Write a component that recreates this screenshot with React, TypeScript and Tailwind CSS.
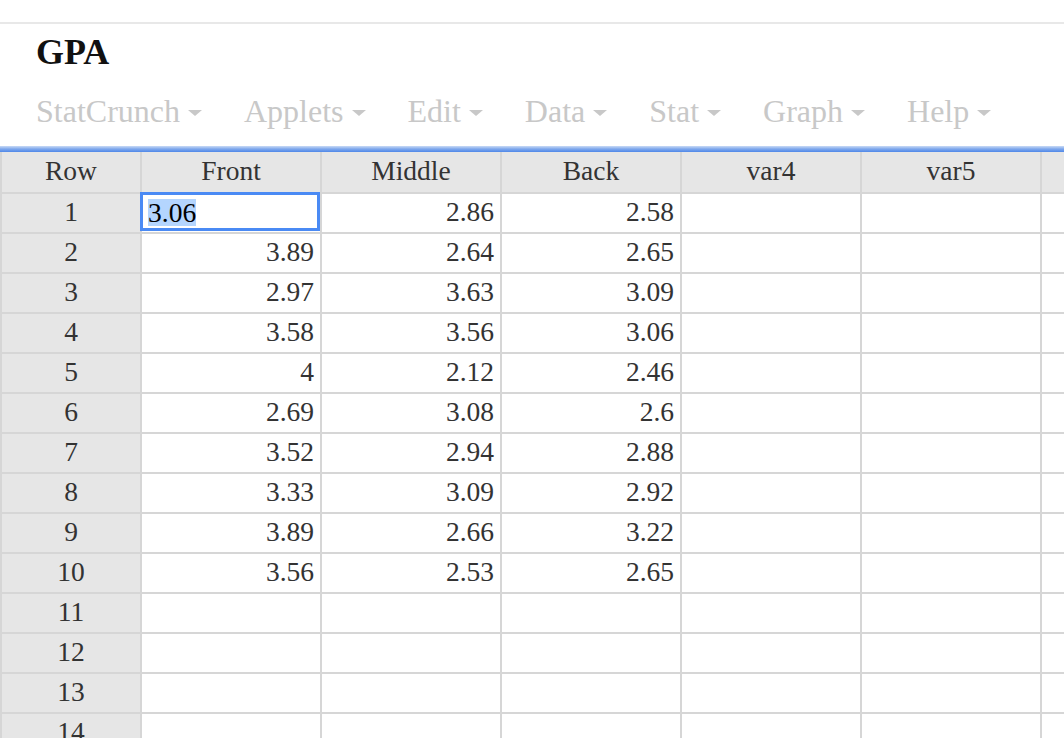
import React from "react";

const menu = ["StatCrunch", "Applets", "Edit", "Data", "Stat", "Graph", "Help"];
const headers = ["Front", "Middle", "Back", "var4", "var5", ""];
const data: string[][] = [
  ["3.06", "2.86", "2.58"],
  ["3.89", "2.64", "2.65"],
  ["2.97", "3.63", "3.09"],
  ["3.58", "3.56", "3.06"],
  ["4", "2.12", "2.46"],
  ["2.69", "3.08", "2.6"],
  ["3.52", "2.94", "2.88"],
  ["3.33", "3.09", "2.92"],
  ["3.89", "2.66", "3.22"],
  ["3.56", "2.53", "2.65"],
];

function Caret() {
  return (
    <span className="inline-block mt-[4px] w-0 h-0 border-l-[7px] border-r-[7px] border-t-[6px] border-l-transparent border-r-transparent border-t-[#c8c8c8]" />
  );
}

export default function App() {
  const rows = Array.from({ length: 14 }, (_, i) => i);
  return (
    <div
      className="w-[1064px] h-[738px] overflow-hidden bg-white"
      style={{ fontFamily: '"Liberation Serif", "Times New Roman", serif' }}
    >
      <div className="h-[22px]" />
      <div className="h-[2px] bg-[#e8e8e8]" />
      <div className="pl-[36px] pt-[8px]">
        <div className="text-[36px] leading-[40px] font-bold text-[#111]">GPA</div>
        <div className="mt-[19px] flex items-center gap-[42px] text-[32px] leading-[40px] text-[#c8c8c8]">
          {menu.map((m) => (
            <div key={m} className="flex items-center gap-[8px]">
              <span>{m}</span>
              <Caret />
            </div>
          ))}
        </div>
      </div>
      <div className="h-[15px]" />
      <div className="h-[6px] bg-gradient-to-b from-[#c9daf5] via-[#7ea7ec] to-[#4f88e8]" />
      <div className="grid grid-cols-[142px_180px_180px_180px_180px_180px_180px] text-[27.5px] text-[#333]">
        <div className="h-[42px] pb-[2px] bg-[#e6e6e6] border-l-2 border-r-2 border-b-2 border-[#d6d6d6] flex items-center justify-center leading-[38px]">
          Row
        </div>
        {headers.map((h, i) => (
          <div
            key={i}
            className="h-[42px] pb-[2px] bg-[#e6e6e6] border-r-2 border-b-2 border-[#d6d6d6] flex items-center justify-center leading-[38px]"
          >
            {h}
          </div>
        ))}
        {rows.map((r) => (
          <React.Fragment key={r}>
            <div className="h-[40px] pb-[2px] bg-[#e6e6e6] border-l-2 border-r-2 border-b-2 border-[#d6d6d6] flex items-center justify-center leading-[36px]">
              {r + 1}
            </div>
            {headers.map((_, c) => {
              const v = data[r]?.[c] ?? "";
              const selected = r === 0 && c === 0;
              return (
                <div
                  key={c}
                  className="relative h-[40px] pb-[2px] bg-white border-r-2 border-b-2 border-[#d6d6d6] flex items-center justify-end pr-[6px] leading-[36px]"
                >
                  {selected ? (
                    <>
                      <div className="absolute -left-[2px] -top-[2px] w-[180px] h-[39px] border-[3px] border-[#4a8af4]" />
                      <div className="flex-1 pl-[6px] flex items-center">
                        <span className="inline-block h-[27px] leading-[27px] bg-[#b4d5fe] text-black">{v}</span>
                      </div>
                    </>
                  ) : (
                    v
                  )}
                </div>
              );
            })}
          </React.Fragment>
        ))}
      </div>
    </div>
  );
}
